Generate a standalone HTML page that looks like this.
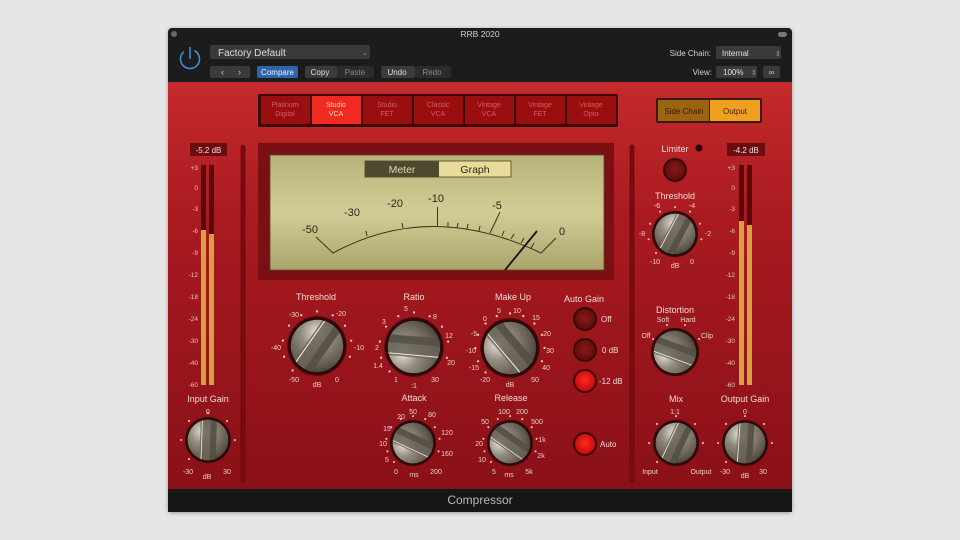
<!DOCTYPE html>
<html><head><meta charset="utf-8"><style>
html,body{margin:0;padding:0;background:#e6e6e6;}
svg{display:block}
text{font-family:"Liberation Sans",sans-serif}
.t{fill:#ead0c8;font-size:7px;text-anchor:middle}
.l{fill:#f2dcd6;font-size:9px;text-anchor:middle}
.s{fill:#e8c4bc;font-size:6.5px;text-anchor:end}
.dt{fill:none;stroke:#f0c8c0;stroke-width:0.085;stroke-linecap:round}
</style></head><body>
<svg width="960" height="540" viewBox="0 0 960 540" xmlns="http://www.w3.org/2000/svg">
<defs>
<linearGradient id="red" x1="0" y1="0" x2="0" y2="1">
<stop offset="0" stop-color="#c42a2c"/><stop offset="0.35" stop-color="#a81a20"/><stop offset="1" stop-color="#8a1018"/></linearGradient>
<radialGradient id="metal" cx="0.35" cy="0.3" r="0.8">
<stop offset="0" stop-color="#e6e2d8"/><stop offset="0.35" stop-color="#948e80"/><stop offset="0.8" stop-color="#5e584c"/><stop offset="1" stop-color="#3a342c"/></radialGradient>
<linearGradient id="vu" x1="0" y1="0" x2="0" y2="1">
<stop offset="0" stop-color="#b8b27a"/><stop offset="0.5" stop-color="#d2cc96"/><stop offset="1" stop-color="#aaa46c"/></linearGradient>
<radialGradient id="btn" cx="0.5" cy="0.45" r="0.6"><stop offset="0" stop-color="#ff2a20"/><stop offset="1" stop-color="#c00808"/></radialGradient>
<radialGradient id="btnoff" cx="0.5" cy="0.45" r="0.6"><stop offset="0" stop-color="#8a1a1a"/><stop offset="1" stop-color="#5a0a0c"/></radialGradient>
<clipPath id="kc"><circle r="1"/></clipPath>
<g id="knob">
<circle r="1.1" fill="#3a0a0c"/>
<circle r="1" fill="url(#metal)"/>
<g clip-path="url(#kc)">
<rect x="-0.38" y="-1.1" width="0.76" height="2.2" fill="#6a6458" opacity="0.85"/>
<rect x="0.1" y="-1.1" width="0.3" height="2.2" fill="#4a443a" opacity="0.6"/>
<rect x="-0.32" y="-1.1" width="0.04" height="2.2" fill="#f0ecd8"/>
</g>
<circle r="1" fill="none" stroke="#2a0606" stroke-width="0.06"/>
</g>
<path id="arc" d="M-0.905 0.905 A1.28 1.28 0 1 1 0.905 0.905"/>
<filter id="sh" x="-5%" y="-5%" width="110%" height="110%"><feDropShadow dx="0" dy="1" stdDeviation="2" flood-opacity="0.35"/></filter>
</defs>

<!-- window -->
<rect x="168" y="28" width="624" height="484" rx="4" fill="#1c1c1c" filter="url(#sh)"/>
<rect x="168" y="82" width="624" height="407" fill="url(#red)"/>
<rect x="168" y="489" width="624" height="23" fill="#161616"/>
<text x="480" y="37" fill="#cfcfcf" font-size="8.5" text-anchor="middle">RRB 2020</text>
<circle cx="174" cy="34" r="3" fill="#6a6a6a"/>
<rect x="778" y="32" width="9" height="5" rx="2.5" fill="#777"/>

<!-- power -->
<circle cx="190" cy="59" r="9.5" fill="none" stroke="#3a8edc" stroke-width="1.6" stroke-dasharray="48 12" transform="rotate(-62 190 59)"/>
<line x1="190" y1="47" x2="190" y2="59" stroke="#3a8edc" stroke-width="1.6"/>
<rect x="210" y="45" width="160" height="14" rx="2" fill="#3a3a3a"/>
<text x="218" y="56" fill="#dcdcdc" font-size="10">Factory Default</text>
<text x="362" y="55" fill="#999" font-size="7">⌄</text>
<rect x="210" y="66" width="40" height="12" rx="2" fill="#3a3a3a"/>
<text x="221" y="75" fill="#ccc" font-size="9">‹</text><text x="238" y="75" fill="#ccc" font-size="9">›</text>
<rect x="257" y="66" width="41" height="12" rx="2" fill="#2d66a8"/>
<text x="277.5" y="75" fill="#e8f0ff" font-size="8" text-anchor="middle">Compare</text>
<rect x="305" y="66" width="32" height="12" rx="2" fill="#3a3a3a"/>
<rect x="337" y="66" width="37" height="12" rx="2" fill="#2c2c2c"/>
<text x="320" y="75" fill="#e0e0e0" font-size="8" text-anchor="middle">Copy</text>
<text x="355" y="75" fill="#888" font-size="8" text-anchor="middle">Paste</text>
<rect x="381" y="66" width="34" height="12" rx="2" fill="#3a3a3a"/>
<rect x="415" y="66" width="36" height="12" rx="2" fill="#2c2c2c"/>
<text x="397" y="75" fill="#e0e0e0" font-size="8" text-anchor="middle">Undo</text>
<text x="432" y="75" fill="#888" font-size="8" text-anchor="middle">Redo</text>
<text x="711" y="56" fill="#d0d0d0" font-size="8" text-anchor="end">Side Chain:</text>
<rect x="716" y="46" width="65" height="13" rx="2" fill="#3a3a3a"/>
<text x="722" y="56" fill="#e0e0e0" font-size="8">Internal</text>
<text x="775" y="56" fill="#999" font-size="7">⇕</text>
<text x="712" y="75" fill="#d0d0d0" font-size="8" text-anchor="end">View:</text>
<rect x="716" y="66" width="41" height="12" rx="2" fill="#3a3a3a"/>
<text x="723" y="75" fill="#e0e0e0" font-size="8">100%</text>
<text x="751" y="75" fill="#999" font-size="7">⇕</text>
<rect x="763" y="66" width="17" height="12" rx="2" fill="#3a3a3a"/>
<text x="771.5" y="75" fill="#ccc" font-size="8" text-anchor="middle">∞</text>

<!-- preset buttons -->
<rect x="258" y="94" width="360" height="33" rx="2" fill="#3a0808"/>
<g font-size="7" text-anchor="middle" fill="#d06060">
<rect x="261" y="96" width="49" height="28" fill="#9a0e10"/><text x="285" y="107">Platinum</text><text x="285" y="116">Digital</text>
<rect x="312" y="96" width="49" height="28" fill="#f02a22"/><text x="336" y="107" fill="#ffd0c8">Studio</text><text x="336" y="116" fill="#ffd0c8">VCA</text>
<rect x="363" y="96" width="49" height="28" fill="#9a0e10"/><text x="387" y="107">Studio</text><text x="387" y="116">FET</text>
<rect x="414" y="96" width="49" height="28" fill="#9a0e10"/><text x="438" y="107">Classic</text><text x="438" y="116">VCA</text>
<rect x="465" y="96" width="49" height="28" fill="#9a0e10"/><text x="489" y="107">Vintage</text><text x="489" y="116">VCA</text>
<rect x="516" y="96" width="49" height="28" fill="#9a0e10"/><text x="540" y="107">Vintage</text><text x="540" y="116">FET</text>
<rect x="567" y="96" width="49" height="28" fill="#9a0e10"/><text x="591" y="107">Vintage</text><text x="591" y="116">Opto</text>
</g>
<rect x="656" y="98" width="106" height="25" rx="2" fill="#3a1a08"/>
<rect x="658" y="100" width="51" height="21" fill="#9a6410"/>
<rect x="710" y="100" width="50" height="21" fill="#f0a020"/>
<text x="684" y="114" font-size="8" fill="#3a1a00" text-anchor="middle">Side Chain</text>
<text x="735" y="114" font-size="8" fill="#4a2000" text-anchor="middle">Output</text>

<!-- dividers -->
<rect x="241" y="145" width="4" height="337" rx="2" fill="#7a0c10" stroke="#5a0608" stroke-width="0.6"/>
<rect x="630" y="145" width="4" height="337" rx="2" fill="#7a0c10" stroke="#5a0608" stroke-width="0.6"/>

<!-- left meter -->
<rect x="190" y="143" width="37" height="13" fill="#6a0c10"/>
<text x="208.5" y="153" fill="#f0e0dc" font-size="8" text-anchor="middle">-5.2 dB</text>
<rect x="201" y="165" width="5" height="220" fill="#5a0808"/>
<rect x="209" y="165" width="5" height="220" fill="#5a0808"/>
<rect x="201" y="230" width="5" height="155" fill="#d8a040"/>
<rect x="209" y="234" width="5" height="151" fill="#d8a040"/>
<g class="s">
<text x="198" y="170">+3</text><text x="198" y="190">0</text><text x="198" y="211">-3</text><text x="198" y="233">-6</text><text x="198" y="255">-9</text><text x="198" y="277">-12</text><text x="198" y="299">-18</text><text x="198" y="321">-24</text><text x="198" y="343">-30</text><text x="198" y="365">-40</text><text x="198" y="387">-60</text>
</g>
<!-- right meter -->
<rect x="727" y="143" width="38" height="13" fill="#6a0c10"/>
<text x="746" y="153" fill="#f0e0dc" font-size="8" text-anchor="middle">-4.2 dB</text>
<rect x="739" y="165" width="5" height="220" fill="#5a0808"/>
<rect x="747" y="165" width="5" height="220" fill="#5a0808"/>
<rect x="739" y="221" width="5" height="164" fill="#d8a040"/>
<rect x="747" y="225" width="5" height="160" fill="#d8a040"/>
<g class="s">
<text x="735" y="170">+3</text><text x="735" y="190">0</text><text x="735" y="211">-3</text><text x="735" y="233">-6</text><text x="735" y="255">-9</text><text x="735" y="277">-12</text><text x="735" y="299">-18</text><text x="735" y="321">-24</text><text x="735" y="343">-30</text><text x="735" y="365">-40</text><text x="735" y="387">-60</text>
</g>

<!-- VU -->
<rect x="258" y="143" width="356" height="137" fill="#7a1014"/>
<rect x="270" y="155" width="334" height="115" fill="url(#vu)" stroke="#5a4a20" stroke-width="0.8"/>
<rect x="365" y="161" width="146" height="16" fill="#e8dc98" stroke="#4a4220" stroke-width="0.8"/>
<rect x="365" y="161" width="74" height="16" fill="#4e4a30"/>
<text x="402" y="173" fill="#ddd8b0" font-size="10.5" text-anchor="middle">Meter</text>
<text x="475" y="173" fill="#2a2818" font-size="10.5" text-anchor="middle">Graph</text>
<g stroke="#3a3418" stroke-width="1" fill="none">
<path d="M316 237 L333 253 Q 430 200 541 253 L556 238"/>
<line x1="437.5" y1="226" x2="437.5" y2="207"/>
<line x1="490" y1="233" x2="500" y2="212"/>
<line x1="367" y1="236" x2="366" y2="231"/>
<line x1="403" y1="228" x2="402" y2="223"/>
<line x1="448" y1="227" x2="448" y2="222"/>
<line x1="457" y1="228" x2="458" y2="223"/>
<line x1="467" y1="229" x2="468" y2="224"/>
<line x1="479" y1="231" x2="480" y2="226"/>
<line x1="502" y1="236" x2="504" y2="231"/>
<line x1="511" y1="239" x2="514" y2="234"/>
<line x1="521" y1="243" x2="524" y2="238"/>
<line x1="531" y1="248" x2="534" y2="243"/>
</g>
<line x1="505" y1="270" x2="537" y2="231" stroke="#151410" stroke-width="1.8"/>
<g fill="#2a2818" font-size="11" text-anchor="middle">
<text x="310" y="233">-50</text><text x="352" y="216">-30</text><text x="395" y="207">-20</text><text x="436" y="202">-10</text><text x="497" y="209">-5</text><text x="562" y="235">0</text>
</g>

<!-- knob dots -->
<use href="#arc" class="dt" stroke-dasharray="0 0.6025" transform="translate(317 346) scale(27)"/>
<use href="#arc" class="dt" stroke-dasharray="0 0.6025" transform="translate(414 347) scale(27)"/>
<use href="#arc" class="dt" stroke-dasharray="0 0.502" transform="translate(510 348) scale(27)"/>
<use href="#arc" class="dt" stroke-dasharray="0 0.6025" transform="translate(413 443) scale(21)" style="stroke-width:0.1"/>
<use href="#arc" class="dt" stroke-dasharray="0 0.6025" transform="translate(510 443) scale(21)" style="stroke-width:0.1"/>
<use href="#arc" class="dt" stroke-dasharray="0 1.004" transform="translate(208 440) scale(21)" style="stroke-width:0.1"/>
<use href="#arc" class="dt" stroke-dasharray="0 0.753" transform="translate(675 234) scale(21)" style="stroke-width:0.1"/>
<use href="#arc" class="dt" stroke-dasharray="0 1.004" transform="translate(676 443) scale(21)" style="stroke-width:0.1"/>
<use href="#arc" class="dt" stroke-dasharray="0 1.004" transform="translate(745 443) scale(21)" style="stroke-width:0.1"/>
<g fill="#f0c8c0"><circle cx="653" cy="339" r="1"/><circle cx="667" cy="325" r="1"/><circle cx="685" cy="325" r="1"/><circle cx="699" cy="339" r="1"/></g>

<!-- knobs -->
<use href="#knob" transform="translate(317 346) scale(27) rotate(35)"/>
<use href="#knob" transform="translate(414 347) scale(27) rotate(-85)"/>
<use href="#knob" transform="translate(510 348) scale(27) rotate(-40)"/>
<use href="#knob" transform="translate(413 443) scale(21) rotate(-65)"/>
<use href="#knob" transform="translate(510 443) scale(21) rotate(-55)"/>
<use href="#knob" transform="translate(208 440) scale(21) rotate(2)"/>
<use href="#knob" transform="translate(675 234) scale(21) rotate(28)"/>
<use href="#knob" transform="translate(675 352) scale(22) rotate(-70)"/>
<use href="#knob" transform="translate(676 443) scale(21) rotate(25)"/>
<use href="#knob" transform="translate(745 443) scale(21) rotate(4)"/>

<!-- labels -->
<g class="l">
<text x="316" y="300">Threshold</text><text x="414" y="300">Ratio</text><text x="513" y="300">Make Up</text><text x="584" y="302">Auto Gain</text>
<text x="414" y="401">Attack</text><text x="511" y="401">Release</text><text x="208" y="402">Input Gain</text>
<text x="675" y="152">Limiter</text><text x="675" y="199">Threshold</text><text x="675" y="313">Distortion</text><text x="676" y="402">Mix</text><text x="745" y="402">Output Gain</text>
</g>
<g class="t">
<text x="294" y="317">-30</text><text x="341" y="316">-20</text><text x="276" y="350">-40</text><text x="359" y="350">-10</text><text x="294" y="382">-50</text><text x="317" y="387">dB</text><text x="337" y="382">0</text>
<text x="406" y="311">5</text><text x="384" y="324">3</text><text x="435" y="319">8</text><text x="449" y="338">12</text><text x="377" y="350">2</text><text x="451" y="365">20</text><text x="378" y="368">1.4</text><text x="396" y="382">1</text><text x="414" y="388">:1</text><text x="435" y="382">30</text>
<text x="485" y="321">0</text><text x="499" y="313">5</text><text x="517" y="313">10</text><text x="536" y="320">15</text><text x="547" y="336">20</text><text x="474" y="336">-5</text><text x="550" y="353">30</text><text x="471" y="353">-10</text><text x="546" y="370">40</text><text x="474" y="370">-15</text><text x="485" y="382">-20</text><text x="510" y="387">dB</text><text x="535" y="382">50</text>
<text x="413" y="414">50</text><text x="401" y="419">20</text><text x="432" y="417">80</text><text x="387" y="431">15</text><text x="447" y="435">120</text><text x="383" y="446">10</text><text x="447" y="456">160</text><text x="387" y="462">5</text><text x="396" y="474">0</text><text x="414" y="477">ms</text><text x="436" y="474">200</text>
<text x="504" y="414">100</text><text x="522" y="414">200</text><text x="485" y="424">50</text><text x="537" y="424">500</text><text x="542" y="442">1k</text><text x="479" y="446">20</text><text x="541" y="458">2k</text><text x="482" y="462">10</text><text x="494" y="474">5</text><text x="509" y="477">ms</text><text x="529" y="474">5k</text>
<text x="208" y="414">0</text><text x="188" y="474">-30</text><text x="207" y="479">dB</text><text x="227" y="474">30</text>
<text x="657" y="208">-6</text><text x="692" y="208">-4</text><text x="642" y="236">-8</text><text x="708" y="236">-2</text><text x="655" y="264">-10</text><text x="675" y="268">dB</text><text x="692" y="264">0</text>
<text x="663" y="322">Soft</text><text x="688" y="322">Hard</text><text x="646" y="338">Off</text><text x="707" y="338">Clip</text>
<text x="675" y="414">1:1</text><text x="650" y="474">Input</text><text x="701" y="474">Output</text>
<text x="745" y="414">0</text><text x="725" y="474">-30</text><text x="745" y="478">dB</text><text x="763" y="474">30</text>
</g>
<g font-size="8" fill="#f0dcd6">
<text x="601" y="322">Off</text><text x="602" y="353">0 dB</text><text x="599" y="384">-12 dB</text><text x="600" y="447">Auto</text>
</g>
<!-- auto gain buttons -->
<circle cx="585" cy="319" r="12" fill="#3a0808"/><circle cx="585" cy="319" r="10" fill="url(#btnoff)"/>
<circle cx="585" cy="350" r="12" fill="#3a0808"/><circle cx="585" cy="350" r="10" fill="url(#btnoff)"/>
<circle cx="585" cy="381" r="12" fill="#3a0808"/><circle cx="585" cy="381" r="10" fill="url(#btn)"/>
<circle cx="585" cy="444" r="12" fill="#3a0808"/><circle cx="585" cy="444" r="10" fill="url(#btn)"/>
<circle cx="675" cy="170" r="12" fill="#3a0808"/><circle cx="675" cy="170" r="10" fill="url(#btnoff)"/>
<circle cx="699" cy="148" r="3.5" fill="#2a0404"/>

<text x="480" y="504" fill="#b8b8b8" font-size="12" text-anchor="middle">Compressor</text>
</svg>
</body></html>
